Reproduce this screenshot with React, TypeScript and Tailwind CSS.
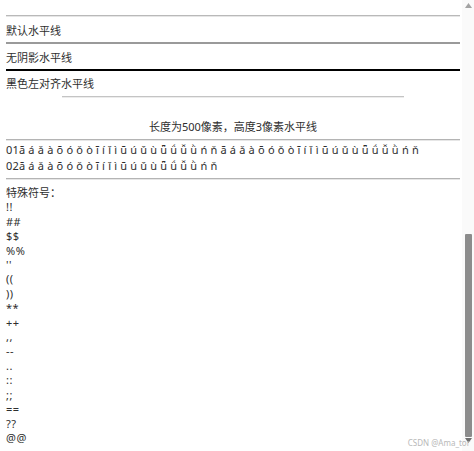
import React from 'react';

const font = { fontFamily: '"Noto Sans", "Noto Sans CJK SC", sans-serif' };

const pinyin = 'ā á ǎ à ō ó ǒ ò ī í ǐ ì ū ú ǔ ù ǖ ǘ ǚ ǜ ń ň';

const symbols = ['!!', '##', '$$', '%%', "''", '((', '))', '**', '++', ',,', '--', '..', '::', ';;', '==', '??', '@@'];

export default function App() {
  return (
    <div className="relative w-[474px] h-[451px] overflow-hidden bg-white flex text-[#2e2e2e]" style={font}>
      {/* page content */}
      <div className="flex-1 pl-[6px] pr-[2px] pt-[15px] text-[11px]">
        <div className="h-[2px] border-t border-[#b9b9b9] border-b border-b-[#e6e6e6]" />
        <div className="mt-[6px] h-[16px] leading-[16px]">默认水平线</div>
        <div className="mt-[3px] h-[2px] bg-[#9a9a9a]" />
        <div className="mt-[6px] h-[16px] leading-[16px]">无阴影水平线</div>
        <div className="mt-[3px] h-[2px] bg-black" />
        <div className="mt-[5px] h-[16px] leading-[16px]">黑色左对齐水平线</div>
        <div className="mt-[4px] mx-auto w-[342px] h-[2px] border-t border-[#c4c4c4] border-b border-b-[#ececec]" />
        <div className="mt-[21px] h-[16px] leading-[16px] text-center">长度为500像素，高度3像素水平线</div>
        <div className="mt-[4px] h-[2px] border-t border-[#b4b4b4] border-b border-b-[#e6e6e6]" />
        <div className="mt-[1px] leading-[16px] whitespace-nowrap tracking-[0.18px]">
          <div>01{pinyin} {pinyin}</div>
          <div>02{pinyin}</div>
        </div>
        <div className="mt-[4px] h-[2px] border-t border-[#b4b4b4] border-b border-b-[#e6e6e6]" />
        <div className="mt-[6px] leading-[14.4px]">
          <div>特殊符号：</div>
          {symbols.map((s) => (
            <div key={s} className="tracking-[0.5px]">{s}</div>
          ))}
        </div>
      </div>

      {/* scrollbar */}
      <div className="w-[12px] shrink-0 bg-[#fafafa] flex flex-col items-center pt-[3px]">
        <svg width="7" height="5" viewBox="0 0 7 5">
          <path d="M0 5 L3.5 0 L7 5 Z" fill="#a3a3a3" />
        </svg>
        <div className="mt-[226px] w-[7px] h-[203px] bg-[#8c8c8c] rounded-[1px]" />
        <svg className="mt-[1px]" width="7" height="5" viewBox="0 0 7 5">
          <path d="M0 0 L7 0 L3.5 5 Z" fill="#6e6e6e" />
        </svg>
      </div>

      {/* watermark */}
      <div className="absolute right-[4px] bottom-[3px] text-[8px] leading-[10px] text-[#b8b8b8] whitespace-nowrap">
        CSDN @Ama_tor
      </div>
    </div>
  );
}
